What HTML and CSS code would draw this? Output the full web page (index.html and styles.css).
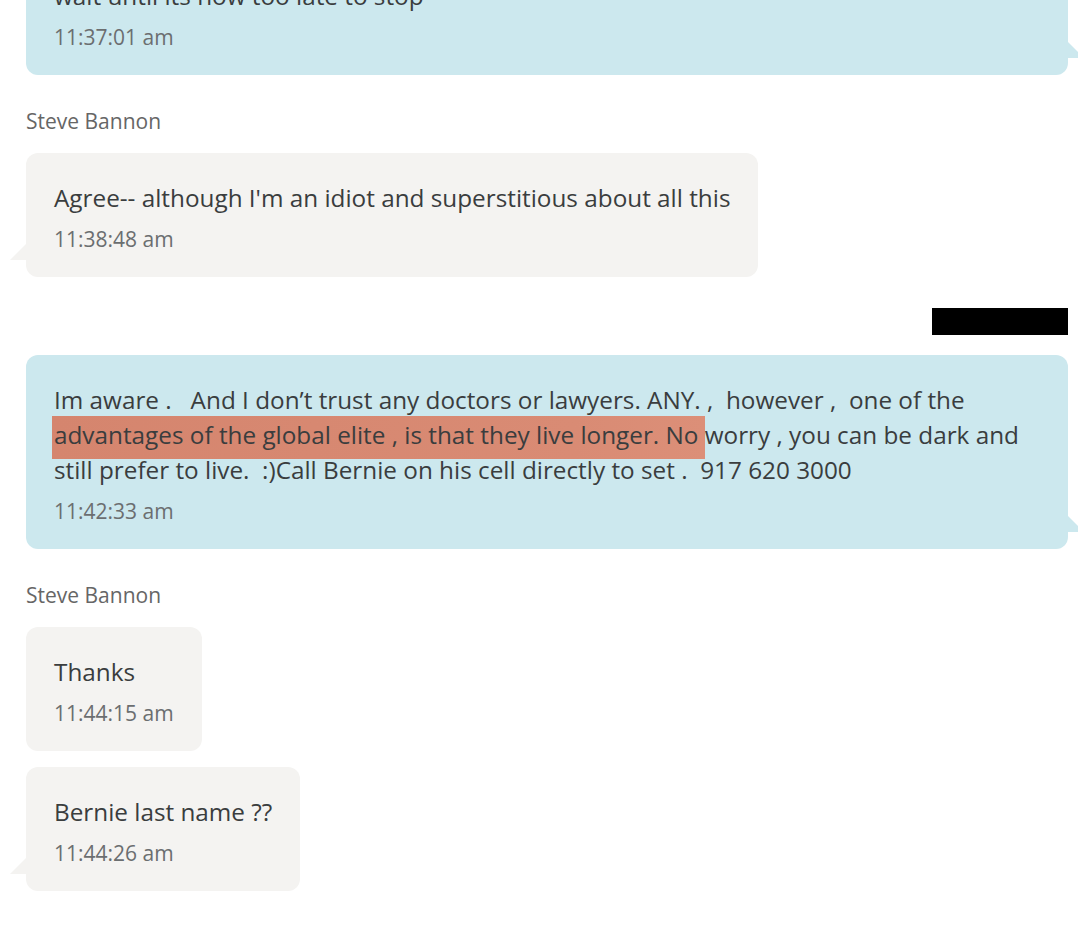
FILE: index.html
```html
<!DOCTYPE html>
<html>
<head>
<meta charset="utf-8">
<link rel="stylesheet" href="styles.css">
</head>
<body>
<div class="page">
  <div class="thread">
    <div class="bubble out tail-right">
      <div class="text">wait until its now too late to stop</div>
      <div class="time">11:37:01 am</div>
    </div>

    <div class="sender">Steve Bannon</div>
    <div class="bubble in tail-left">
      <div class="text">Agree-- although I'm an idiot and superstitious about all this</div>
      <div class="time">11:38:48 am</div>
    </div>

    <div class="redacted"></div>
    <div class="bubble out tail-right">
      <div class="text">Im aware .   And I don’t trust any doctors or lawyers. ANY. ,  however ,  one of the<br><span class="hl">advantages of the global elite , is that they live longer. No </span>worry , you can be dark and<br>still prefer to live.  :)Call Bernie on his cell directly to set .  917 620 3000</div>
      <div class="time">11:42:33 am</div>
    </div>

    <div class="sender">Steve Bannon</div>
    <div class="bubble in">
      <div class="text">Thanks</div>
      <div class="time">11:44:15 am</div>
    </div>
    <div class="bubble in tail-left next">
      <div class="text">Bernie last name ??</div>
      <div class="time">11:44:26 am</div>
    </div>
  </div>
</div>
</body>
</html>
```

FILE: styles.css
```css
html, body {
  margin: 0;
  padding: 0;
  background: #ffffff;
}

.page {
  width: 100%;
  height: 942px;
  overflow: hidden;
  font-family: "Open Sans", "Liberation Sans", sans-serif;
}

.thread {
  display: flex;
  flex-direction: column;
  align-items: flex-start;
  padding: 0 10px 0 26px;
  margin-top: -49px;
}

.bubble {
  position: relative;
  box-sizing: border-box;
  padding: 27px 28px 26px 28px;
  border-radius: 12px;
}

.bubble.out {
  align-self: stretch;
  background: #cce8ee;
}

.bubble.in {
  background: #f4f3f1;
}

.bubble.next {
  margin-top: 16px;
}

.text {
  font-size: 24.3px;
  line-height: 35px;
  color: #3a3d3e;
  white-space: pre-wrap;
}

.hl {
  background: linear-gradient(to right, #d5856e, #d98b74 80%, #dc8f78);
  padding: 2px 0 8px 2px;
  margin-left: -2px;
}

.time {
  margin-top: 12px;
  font-size: 21px;
  line-height: 24px;
  color: #6b6e70;
}

.sender {
  margin-top: 34px;
  margin-bottom: 20px;
  font-size: 21px;
  line-height: 24px;
  color: #666666;
}

.redacted {
  align-self: flex-end;
  width: 136px;
  height: 27px;
  margin-top: 31px;
  margin-bottom: 20px;
  background: #000000;
}

.tail-left::after {
  content: "";
  position: absolute;
  left: -16px;
  bottom: 17px;
  width: 16px;
  height: 16px;
  background: #f4f3f1;
  clip-path: polygon(100% 0, 0 100%, 100% 100%);
}

.tail-right::after {
  content: "";
  position: absolute;
  right: -16px;
  bottom: 17px;
  width: 16px;
  height: 16px;
  background: #cce8ee;
  clip-path: polygon(0 0, 100% 100%, 0 100%);
}
```
